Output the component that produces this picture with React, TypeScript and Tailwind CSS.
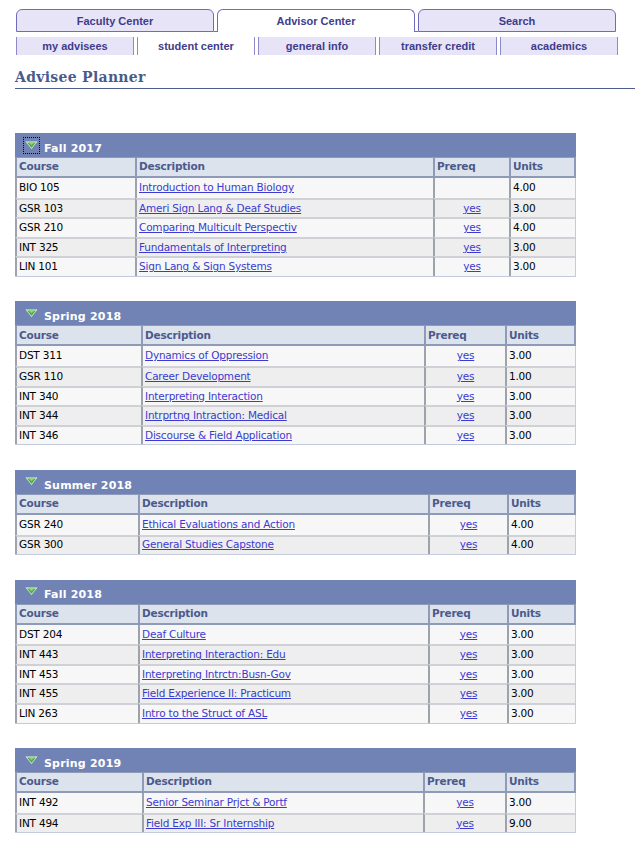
import React from "react";

type Row = { course: string; desc: string; prereq: boolean; units: string };
type Section = { title: string; cols: string; rows: Row[]; focus?: boolean };

const sections: Section[] = [
  {
    title: "Fall 2017",
    cols: "grid-cols-[120px_298px_76px_66px]",
    focus: true,
    rows: [
      { course: "BIO 105", desc: "Introduction to Human Biology", prereq: false, units: "4.00" },
      { course: "GSR 103", desc: "Ameri Sign Lang & Deaf Studies", prereq: true, units: "3.00" },
      { course: "GSR 210", desc: "Comparing Multicult Perspectiv", prereq: true, units: "4.00" },
      { course: "INT 325", desc: "Fundamentals of Interpreting", prereq: true, units: "3.00" },
      { course: "LIN 101", desc: "Sign Lang & Sign Systems", prereq: true, units: "3.00" },
    ],
  },
  {
    title: "Spring 2018",
    cols: "grid-cols-[126px_283px_81px_70px]",
    rows: [
      { course: "DST 311", desc: "Dynamics of Oppression", prereq: true, units: "3.00" },
      { course: "GSR 110", desc: "Career Development", prereq: true, units: "1.00" },
      { course: "INT 340", desc: "Interpreting Interaction", prereq: true, units: "3.00" },
      { course: "INT 344", desc: "Intrprtng Intraction: Medical", prereq: true, units: "3.00" },
      { course: "INT 346", desc: "Discourse & Field Application", prereq: true, units: "3.00" },
    ],
  },
  {
    title: "Summer 2018",
    cols: "grid-cols-[123px_290px_79px_68px]",
    rows: [
      { course: "GSR 240", desc: "Ethical Evaluations and Action", prereq: true, units: "4.00" },
      { course: "GSR 300", desc: "General Studies Capstone", prereq: true, units: "4.00" },
    ],
  },
  {
    title: "Fall 2018",
    cols: "grid-cols-[123px_290px_79px_68px]",
    rows: [
      { course: "DST 204", desc: "Deaf Culture", prereq: true, units: "3.00" },
      { course: "INT 443", desc: "Interpreting Interaction: Edu", prereq: true, units: "3.00" },
      { course: "INT 453", desc: "Interpreting Intrctn:Busn-Gov", prereq: true, units: "3.00" },
      { course: "INT 455", desc: "Field Experience II: Practicum", prereq: true, units: "3.00" },
      { course: "LIN 263", desc: "Intro to the Struct of ASL", prereq: true, units: "3.00" },
    ],
  },
  {
    title: "Spring 2019",
    cols: "grid-cols-[127px_281px_82px_70px]",
    rows: [
      { course: "INT 492", desc: "Senior Seminar Prjct & Portf", prereq: true, units: "3.00" },
      { course: "INT 494", desc: "Field Exp III: Sr Internship", prereq: true, units: "9.00" },
    ],
  },
];

const verdana = { fontFamily: '"DejaVu Sans", Verdana, sans-serif' };
const arial = { fontFamily: '"Liberation Sans", Arial, sans-serif' };

function Triangle() {
  return (
    <svg width="13" height="9" viewBox="0 0 13 9">
      <polygon points="0.5,0.5 12.5,0.5 6.5,8" fill="#e8f5e0" />
      <polygon points="2,1.5 11,1.5 6.5,7" fill="#4fb04a" />
      <polygon points="3.5,1.5 9.5,1.5 6.5,4" fill="#8fd67f" />
    </svg>
  );
}

function GridSection({ s }: { s: Section }) {
  return (
    <div className="w-[561px]">
      <div className="h-[24px] bg-[#7183b5] flex items-center pl-[8px]">
        <div
          className={
            s.focus
              ? "w-[17px] h-[17px] border border-dotted border-black flex items-center justify-center"
              : "w-[17px] h-[17px] flex items-center justify-center"
          }
        >
          <Triangle />
        </div>
        <span className="ml-[4px] mt-[8px] text-white font-bold text-[11px] tracking-[0.2px]" style={verdana}>
          {s.title}
        </span>
      </div>
      <div className={`grid ${s.cols} h-[21px] bg-[#dce3ed] border-r-2 border-[#8e9bb8]`}>
        {["Course", "Description", "Prereq", "Units"].map((h) => (
          <div
            key={h}
            className="border-l-2 border-t border-b-2 border-[#8e9bb8] pl-[2px] flex items-center text-[10.5px] tracking-[-0.2px] font-bold text-[#4b5a8c]"
            style={verdana}
          >
            {h}
          </div>
        ))}
      </div>
      <div className="border-r border-b border-[#c3cbdc]">
        {s.rows.map((r, i) => (
          <div
            key={r.course}
            className={`grid ${s.cols} h-[19.6px] ${i % 2 === 0 ? "bg-[#f7f7f7]" : "bg-[#eeeeee]"} text-[10.5px] tracking-[-0.2px] text-black`}
            style={verdana}
          >
            <div className={`border-l-2 border-[#9ea2ad] pl-[2px] flex items-center ${i > 0 ? "border-t-2 border-t-[#cfd1d6]" : ""}`}>
              {r.course}
            </div>
            <div className={`border-l-2 border-[#9ea2ad] pl-[2px] flex items-center ${i > 0 ? "border-t-2 border-t-[#cfd1d6]" : ""}`}>
              <a className="text-[#3b3bd0] underline" href="#">
                {r.desc}
              </a>
            </div>
            <div className={`border-l-2 border-[#9ea2ad] flex items-center justify-center ${i > 0 ? "border-t-2 border-t-[#cfd1d6]" : ""}`}>
              {r.prereq ? (
                <a className="text-[#3b3bd0] underline" href="#">
                  yes
                </a>
              ) : null}
            </div>
            <div className={`border-l-2 border-[#9ea2ad] pl-[2px] flex items-center ${i > 0 ? "border-t-2 border-t-[#cfd1d6]" : ""}`}>
              {r.units}
            </div>
          </div>
        ))}
      </div>
    </div>
  );
}

export default function App() {
  const topTabs = [
    { label: "Faculty Center", active: false },
    { label: "Advisor Center", active: true },
    { label: "Search", active: false },
  ];
  const subTabs = [
    { label: "my advisees", active: false },
    { label: "student center", active: true },
    { label: "general info", active: false },
    { label: "transfer credit", active: false },
    { label: "academics", active: false },
  ];
  return (
    <div className="w-[641px] min-h-[857px] bg-white pt-[9px] pl-[15px] pb-[20px]">
      <div className="flex w-[603px] ml-[1px]">
        {topTabs.map((t, i) => (
          <div key={t.label} className="flex">
            <div
              className={`w-[198px] h-[23px] pt-[1px] rounded-t-[6px] border border-[#6f6cbd] flex items-center justify-center text-[11px] font-bold text-[#3e3c8c] ${
                t.active ? "bg-white border-b-0" : "bg-[#e6e4f6]"
              }`}
              style={arial}
            >
              {t.label}
            </div>
            {i < topTabs.length - 1 ? <div className="w-[3px] h-[23px] border-b border-[#6f6cbd]" /> : null}
          </div>
        ))}
      </div>
      <div className="flex gap-[3px] mt-[5px] ml-[1px]">
        {subTabs.map((t) => (
          <div
            key={t.label}
            className={`w-[118px] h-[18px] border-l border-r border-[#8d8acb] flex items-center justify-center text-[11px] font-bold text-[#3e3c8c] ${
              t.active ? "bg-white" : "bg-[#e6e4f6]"
            }`}
            style={arial}
          >
            {t.label}
          </div>
        ))}
      </div>
      <div className="w-[620px] mt-[13px] border-b border-[#4c5d8e] pb-[2px]">
        <div
          className="text-[14px] font-bold text-[#495b8d] leading-[17px] tracking-[0.3px] pt-[1px]"
          style={{ fontFamily: '"DejaVu Serif", Georgia, serif' }}
        >
          Advisee Planner
        </div>
      </div>
      <div className="mt-[44px] flex flex-col gap-[24.5px]">
        {sections.map((s) => (
          <GridSection key={s.title} s={s} />
        ))}
      </div>
    </div>
  );
}
